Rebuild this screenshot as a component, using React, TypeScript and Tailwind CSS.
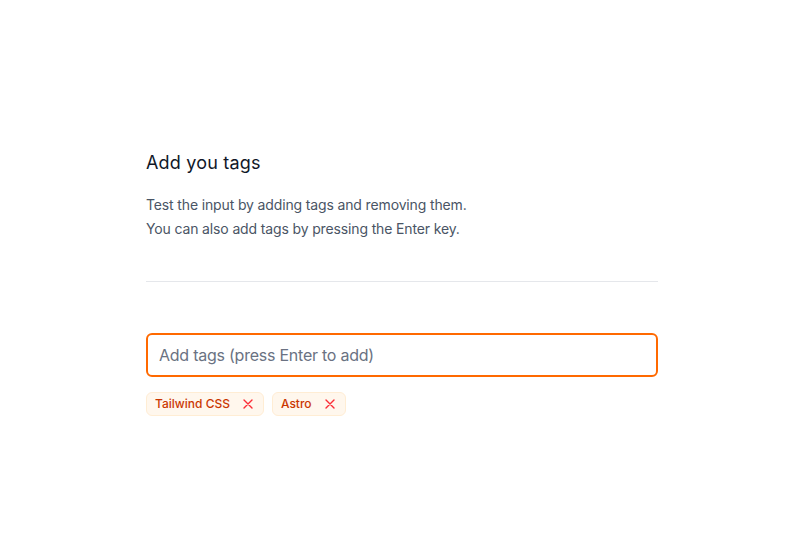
import React, { useState } from "react";

export default function App() {
  const [tags, setTags] = useState<string[]>(["Tailwind CSS", "Astro"]);
  const [value, setValue] = useState("");
  return (
    <div
      className="min-h-[554px] w-full bg-white pl-[146px] pt-[149px]"
      style={{ fontFamily: "Inter, 'Noto Sans', sans-serif" }}
    >
      <div className="w-[512px]">
        <h2 className="text-lg leading-7 font-normal tracking-[0.01em] text-gray-900">Add you tags</h2>
        <div className="mt-4 text-sm leading-6 tracking-[-0.01em] text-gray-600">
          <p>Test the input by adding tags and removing them.</p>
          <p>You can also add tags by pressing the Enter key.</p>
        </div>
        <div className="mt-10 h-px w-full bg-gray-200" />
        <div className="mt-[51px]">
          <input
            value={value}
            onChange={(e) => setValue(e.target.value)}
            onKeyDown={(e) => {
              if (e.key === "Enter" && value.trim()) {
                setTags([...tags, value.trim()]);
                setValue("");
              }
            }}
            placeholder="Add tags (press Enter to add)"
            className="block h-[44px] w-full rounded-md border-2 border-orange-500 bg-white px-[11px] text-base tracking-[-0.015em] text-gray-900 outline-none placeholder:text-gray-500"
          />
          <div className="mt-[15px] flex flex-wrap gap-2">
            {tags.map((t) => (
              <span
                key={t}
                className="inline-flex h-6 items-center rounded-md border border-orange-100 bg-orange-50 pl-2 pr-[9px] text-xs font-medium text-orange-700"
              >
                {t}
                <button
                  onClick={() => setTags(tags.filter((x) => x !== t))}
                  className="ml-3 text-red-500"
                >
                  <svg width="12" height="12" viewBox="0 0 12 12" fill="none" stroke="currentColor" strokeWidth="1.4" strokeLinecap="round">
                    <path d="M2 2l8 8M10 2l-8 8" />
                  </svg>
                </button>
              </span>
            ))}
          </div>
        </div>
      </div>
    </div>
  );
}
